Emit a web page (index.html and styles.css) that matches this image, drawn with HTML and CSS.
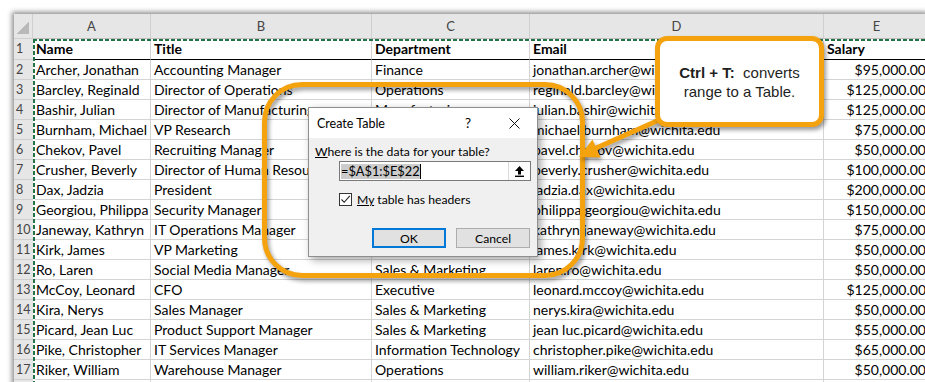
FILE: index.html
```html
<!DOCTYPE html>
<html>
<head>
<meta charset="utf-8">
<link rel="stylesheet" href="styles.css">
</head>
<body>
<div class="stage">
  <div class="sheet">
    <div class="grid">
      <div class="corner"></div><div class="ch">A</div><div class="ch">B</div><div class="ch">C</div><div class="ch">D</div><div class="ch">E</div>

      <div class="rh">1</div><div class="c hd">Name</div><div class="c hd">Title</div><div class="c hd">Department</div><div class="c hd">Email</div><div class="c hd">Salary</div>
      <div class="rh">2</div><div class="c">Archer, Jonathan</div><div class="c">Accounting Manager</div><div class="c">Finance</div><div class="c">jonathan.archer@wichita.edu</div><div class="c n">$95,000.00</div>
      <div class="rh">3</div><div class="c">Barcley, Reginald</div><div class="c">Director of Operations</div><div class="c">Operations</div><div class="c">reginald.barcley@wichita.edu</div><div class="c n">$125,000.00</div>
      <div class="rh">4</div><div class="c">Bashir, Julian</div><div class="c">Director of Manufacturing</div><div class="c">Manufacturing</div><div class="c">julian.bashir@wichita.edu</div><div class="c n">$125,000.00</div>
      <div class="rh">5</div><div class="c">Burnham, Michael</div><div class="c">VP Research</div><div class="c">Research</div><div class="c">michael.burnham@wichita.edu</div><div class="c n">$75,000.00</div>
      <div class="rh">6</div><div class="c">Chekov, Pavel</div><div class="c">Recruiting Manager</div><div class="c">Human Resources</div><div class="c">pavel.chekov@wichita.edu</div><div class="c n">$50,000.00</div>
      <div class="rh">7</div><div class="c">Crusher, Beverly</div><div class="c">Director of Human Resources</div><div class="c">Human Resources</div><div class="c">beverly.crusher@wichita.edu</div><div class="c n">$100,000.00</div>
      <div class="rh">8</div><div class="c">Dax, Jadzia</div><div class="c">President</div><div class="c">Executive</div><div class="c">jadzia.dax@wichita.edu</div><div class="c n">$200,000.00</div>
      <div class="rh">9</div><div class="c">Georgiou, Philippa</div><div class="c">Security Manager</div><div class="c">Security</div><div class="c">philippa.georgiou@wichita.edu</div><div class="c n">$150,000.00</div>
      <div class="rh">10</div><div class="c">Janeway, Kathryn</div><div class="c">IT Operations Manager</div><div class="c">Information Technology</div><div class="c">kathryn.janeway@wichita.edu</div><div class="c n">$75,000.00</div>
      <div class="rh">11</div><div class="c">Kirk, James</div><div class="c">VP Marketing</div><div class="c">Sales &amp; Marketing</div><div class="c">james.kirk@wichita.edu</div><div class="c n">$50,000.00</div>
      <div class="rh">12</div><div class="c">Ro, Laren</div><div class="c">Social Media Manager</div><div class="c">Sales &amp; Marketing</div><div class="c">laren.ro@wichita.edu</div><div class="c n">$50,000.00</div>
      <div class="rh">13</div><div class="c">McCoy, Leonard</div><div class="c">CFO</div><div class="c">Executive</div><div class="c">leonard.mccoy@wichita.edu</div><div class="c n">$125,000.00</div>
      <div class="rh">14</div><div class="c">Kira, Nerys</div><div class="c">Sales Manager</div><div class="c">Sales &amp; Marketing</div><div class="c">nerys.kira@wichita.edu</div><div class="c n">$50,000.00</div>
      <div class="rh">15</div><div class="c">Picard, Jean Luc</div><div class="c">Product Support Manager</div><div class="c">Sales &amp; Marketing</div><div class="c">jean luc.picard@wichita.edu</div><div class="c n">$55,000.00</div>
      <div class="rh">16</div><div class="c">Pike, Christopher</div><div class="c">IT Services Manager</div><div class="c">Information Technology</div><div class="c">christopher.pike@wichita.edu</div><div class="c n">$65,000.00</div>
      <div class="rh">17</div><div class="c">Riker, William</div><div class="c">Warehouse Manager</div><div class="c">Operations</div><div class="c">william.riker@wichita.edu</div><div class="c n">$50,000.00</div>
      <div class="rh"></div><div class="c"></div><div class="c"></div><div class="c"></div><div class="c"></div><div class="c n"></div>
    </div>
    <div class="ants"></div>
  </div>

  <div class="ring"></div>

  <svg class="arrow" width="925" height="382" viewBox="0 0 925 382">
    <line x1="668" y1="116" x2="594" y2="149" stroke="#f4a30f" stroke-width="5"/>
    <polygon points="579,157 592.5,139.5 600.5,157.5" fill="#f4a30f"/>
  </svg>

  <div class="callout">
    <p class="ctext"><b>Ctrl + T:</b>&nbsp; converts<br>range to a Table.</p>
  </div>

  <div class="dialog">
    <div class="dtitle">
      <span class="dname">Create Table</span>
      <span class="dhelp">?</span>
      <span class="dclose"><svg width="11" height="11" viewBox="0 0 11 11"><path d="M0.5 0.5 L10.5 10.5 M10.5 0.5 L0.5 10.5" stroke="#111" stroke-width="1" fill="none"/></svg></span>
    </div>
    <div class="dbody">
      <div class="dq"><u>W</u>here is the data for your table?</div>
      <div class="dinput">
        <span class="dval"><span class="dsel">=$A$1:$E$22</span><span class="caret"></span></span>
        <span class="dref"><svg width="9" height="11" viewBox="0 0 9 11"><path d="M4.5 0 L9 5 L6 5 L6 8.5 L3 8.5 L3 5 L0 5 Z" fill="#000"/><rect x="0" y="9.6" width="9" height="1.4" fill="#000"/></svg></span>
      </div>
      <div class="dcheck">
        <span class="box"><svg width="11" height="11" viewBox="0 0 11 11"><path d="M1.5 5.5 L4.2 8.3 L9.8 1.8" stroke="#222" stroke-width="1.1" fill="none"/></svg></span>
        <span class="clabel"><u>My</u> table has headers</span>
      </div>
      <div class="dbtns">
        <span class="btn ok">OK</span>
        <span class="btn">Cancel</span>
      </div>
    </div>
  </div>
</div>
</body>
</html>
```

FILE: styles.css
```css
html, body {
  margin: 0;
  padding: 0;
  background: #fff;
  overflow: hidden;
}

.stage {
  position: relative;
  width: 925px;
  height: 382px;
  overflow: hidden;
  box-sizing: border-box;
  padding: 14px 0 0 14px;
}

.sheet {
  position: relative;
  width: 916px;
  box-shadow: -2px -2px 5px rgba(0, 0, 0, 0.45);
}

.grid {
  display: grid;
  grid-template-columns: 19px 118px 221px 158px 294px 106px;
  grid-template-rows: 25px 21px;
  grid-auto-rows: 20px;
  background: #fff;
  font-family: Lato, "Liberation Sans", sans-serif;
}

.grid > div {
  box-sizing: border-box;
  white-space: nowrap;
  overflow: hidden;
}

.corner {
  background: #e6e6e6 linear-gradient(to bottom right, transparent 50%, #b9b9b9 50%) no-repeat right 3px bottom 4px / 13px 13px;
  border-right: 1px solid #cfcfcf;
  border-bottom: 1px solid #cfcfcf;
}

.ch {
  background: #e6e6e6;
  color: #444;
  font-size: 13px;
  text-align: center;
  line-height: 25px;
  border-right: 1px solid #cfcfcf;
  border-bottom: 1px solid #bdbdbd;
}

.rh {
  background: #e6e6e6;
  color: #444;
  font-size: 12.5px;
  line-height: 19px;
  padding-left: 2px;
  border-bottom: 1px solid #cfcfcf;
}

.c {
  font-size: 14px;
  line-height: 19px;
  color: #000;
  padding: 0 3px;
  border-right: 1px solid #d4d4d4;
  border-bottom: 1px solid #d4d4d4;
}

.c.hd {
  font-weight: bold;
  line-height: 20px;
  border-bottom: 1px solid #000;
}

.c.n {
  text-align: right;
}

.ants {
  position: absolute;
  left: 19px;
  top: 25px;
  right: 0;
  bottom: 0;
  background:
    repeating-linear-gradient(90deg, #217346 0 4px, #fff 4px 6px) left top / 100% 2px no-repeat,
    repeating-linear-gradient(180deg, #217346 0 4px, #fff 4px 6px) left top / 2px 100% no-repeat;
}

.ring {
  position: absolute;
  left: 262px;
  top: 82px;
  width: 323px;
  height: 196px;
  box-sizing: border-box;
  border: 5px solid #f4a30f;
  border-radius: 40px;
  filter: drop-shadow(2px 3px 2px rgba(0, 0, 0, 0.4));
}

.arrow {
  position: absolute;
  left: 0;
  top: 0;
  filter: drop-shadow(2px 3px 2px rgba(0, 0, 0, 0.4));
}

.callout {
  position: absolute;
  left: 655px;
  top: 36px;
  width: 169px;
  height: 91px;
  box-sizing: border-box;
  border: 5px solid #f4a30f;
  border-radius: 12px;
  background: #fff;
  box-shadow: 2px 3px 4px rgba(0, 0, 0, 0.4);
  display: flex;
  align-items: center;
  justify-content: center;
}

.ctext {
  margin: 0;
  font-family: "Liberation Sans", Arial, sans-serif;
  font-size: 15px;
  line-height: 19px;
  color: #1f1f1f;
  text-align: center;
}

.dialog {
  position: absolute;
  left: 308px;
  top: 107px;
  width: 230px;
  height: 150px;
  box-sizing: border-box;
  border: 1px solid #8f8f8f;
  background: #f0f0f0;
  box-shadow: 3px 3px 8px rgba(0, 0, 0, 0.35);
  font-family: Lato, "Noto Sans", sans-serif;
  font-size: 12.2px;
  color: #000;
  display: flex;
  flex-direction: column;
}

.dtitle {
  height: 30px;
  background: #fff;
  display: flex;
  align-items: center;
  padding-left: 8px;
}

.dname {
  flex: 1;
  font-size: 12.5px;
}

.dhelp {
  width: 46px;
  text-align: center;
  font-size: 13.5px;
}

.dclose {
  width: 46px;
  display: flex;
  justify-content: center;
}

.dbody {
  padding-left: 6px;
  display: flex;
  flex-direction: column;
}

.dq {
  margin-top: 6px;
  line-height: 16px;
}

.dinput {
  margin-top: 1px;
  margin-left: 24px;
  width: 192px;
  height: 20px;
  box-sizing: border-box;
  border: 1px solid #7a7a7a;
  background: #fff;
  display: flex;
}

.dval {
  flex: 1;
  display: flex;
  align-items: center;
  padding-left: 1px;
}

.dsel {
  background: #cccccc;
  line-height: 15px;
  font-size: 12.8px;
}

.caret {
  width: 1px;
  height: 15px;
  background: #000;
}

.dref {
  width: 21px;
  display: flex;
  align-items: center;
  justify-content: center;
  border-left: 1px solid #dadada;
  background: #fdfdfd;
}

.dcheck {
  margin-top: 12px;
  margin-left: 24px;
  display: flex;
  align-items: center;
  height: 13px;
}

.box {
  width: 13px;
  height: 13px;
  box-sizing: border-box;
  border: 1px solid #333;
  background: #fff;
  display: flex;
  align-items: center;
  justify-content: center;
}

.clabel {
  margin-left: 5px;
}

.dbtns {
  margin-top: 22px;
  margin-left: 57px;
  display: flex;
  gap: 10px;
}

.btn {
  width: 74px;
  height: 20px;
  box-sizing: border-box;
  border: 1px solid #adadad;
  background: #e1e1e1;
  display: flex;
  align-items: center;
  justify-content: center;
}

.btn.ok {
  border: 2px solid #0078d7;
}
```
